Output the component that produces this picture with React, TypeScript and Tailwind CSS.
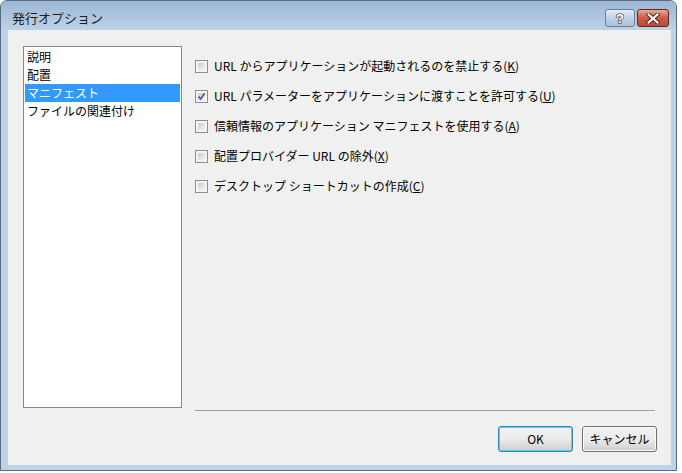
import React from 'react';

type OptionT = { label: string; key: string; checked: boolean };

const sections = ['説明', '配置', 'マニフェスト', 'ファイルの関連付け'];

const options: OptionT[] = [
  { label: 'URL からアプリケーションが起動されるのを禁止する', key: 'K', checked: false },
  { label: 'URL パラメーターをアプリケーションに渡すことを許可する', key: 'U', checked: true },
  { label: '信頼情報のアプリケーション マニフェストを使用する', key: 'A', checked: false },
  { label: '配置プロバイダー URL の除外', key: 'X', checked: false },
  { label: 'デスクトップ ショートカットの作成', key: 'C', checked: false },
];

const Checkbox = ({ checked }: { checked: boolean }) => (
  <span className="w-[13px] h-[13px] shrink-0 border border-[#8e8f8f] bg-[#f4f4f4] p-[2px] flex">
    <span className="relative flex-1 bg-gradient-to-br from-[#c9cdd2] to-[#f4f4f4]">
      {checked && (
        <svg className="absolute -left-[1px] -top-[1px]" width="9" height="9" viewBox="0 0 9 9">
          <path d="M1.5 4.5 L3.6 7 L7.6 1.2" fill="none" stroke="#4a5f97" strokeWidth="1.8" />
        </svg>
      )}
    </span>
  </span>
);

const CaptionButton = ({ kind }: { kind: 'help' | 'close' }) =>
  kind === 'help' ? (
    <div className="w-[30px] h-[18px] rounded-[3px] border border-[#6e7f94] bg-gradient-to-b from-[#e3ecf6] via-[#bfd1e5] to-[#a9c1dc] flex items-center justify-center">
      <svg width="12" height="14" viewBox="0 0 12 14">
        <text
          x="6"
          y="12"
          textAnchor="middle"
          fontFamily="'Liberation Sans', sans-serif"
          fontWeight="bold"
          fontSize="13"
          fill="#fff"
          stroke="#4b5a6b"
          strokeWidth="1.6"
          paintOrder="stroke"
        >
          ?
        </text>
      </svg>
    </div>
  ) : (
    <div className="w-[32px] h-[18px] rounded-[3px] border border-[#5d2a24] bg-gradient-to-b from-[#e8a896] via-[#cc5a46] to-[#c24a34] flex items-center justify-center">
      <svg width="14" height="11" viewBox="0 0 14 11">
        <path d="M2.5 1.5 L11.5 9.5 M11.5 1.5 L2.5 9.5" stroke="#4c1f19" strokeWidth="4" strokeLinecap="square" />
        <path d="M2.5 1.5 L11.5 9.5 M11.5 1.5 L2.5 9.5" stroke="#fff" strokeWidth="2.2" strokeLinecap="square" />
      </svg>
    </div>
  );

export default function App() {
  return (
    <div className="w-[682px] h-[473px] bg-white flex font-['Noto_Sans_CJK_JP','Noto_Sans',sans-serif] text-[12px] text-black overflow-hidden">
      <div className="w-[677px] h-[471px] rounded-t-[7px] border border-[#5a6b80] bg-[#bed3ea] flex flex-col">
        {/* title bar */}
        <div className="h-[29px] rounded-t-[6px] bg-gradient-to-b from-[#9cb7d4] to-[#bcd2e9] flex items-start">
          <span className="pl-[11px] pt-[8px] text-[13px] leading-[18px] text-[#1e1e1e]">発行オプション</span>
          <div className="ml-auto mt-[8px] mr-[7px] flex gap-[2px]">
            <CaptionButton kind="help" />
            <CaptionButton kind="close" />
          </div>
        </div>

        {/* client area */}
        <div className="flex-1 pl-[7px] pr-[5px] pb-[5px] flex">
          <div className="flex-1 bg-[#f0f0f0] flex flex-col pt-[16px] pl-[15px] pr-[14px]">
            <div className="flex">
              <div className="w-[159px] h-[362px] border border-[#828790] bg-white p-[1px]">
                {sections.map((s, i) => (
                  <div
                    key={s}
                    className={
                      i === 2
                        ? 'h-[18px] leading-[18px] pl-[2px] bg-[#3399ff] text-white'
                        : 'h-[18px] leading-[18px] pl-[2px]'
                    }
                  >
                    {s}
                  </div>
                ))}
              </div>

              <div className="ml-[13px] w-[460px] h-[365px] flex flex-col">
                <div className="flex flex-col pt-[5px]">
                  {options.map((o) => (
                    <div key={o.key} className="h-[30px] flex items-center gap-[6px]">
                      <Checkbox checked={o.checked} />
                      <span className="leading-[16px]">
                        {o.label}(<span className="underline">{o.key}</span>)
                      </span>
                    </div>
                  ))}
                </div>
                <div className="mt-auto h-px bg-[#a0a0a0]" />
              </div>
            </div>

            <div className="mt-[15px] flex justify-end gap-[9px]">
              <button className="w-[75px] h-[26px] rounded-[3px] border border-[#3c7fb1] shadow-[inset_0_0_0_1px_#48d6fb] bg-gradient-to-b from-[#f2f2f2] via-[#ebebeb] to-[#cfcfcf] text-[12px]">
                OK
              </button>
              <button className="w-[75px] h-[26px] rounded-[3px] border border-[#707070] shadow-[inset_0_0_0_1px_#fbfbfb] bg-gradient-to-b from-[#f2f2f2] via-[#ebebeb] to-[#cfcfcf] text-[12px]">
                キャンセル
              </button>
            </div>
          </div>
        </div>
      </div>
    </div>
  );
}
